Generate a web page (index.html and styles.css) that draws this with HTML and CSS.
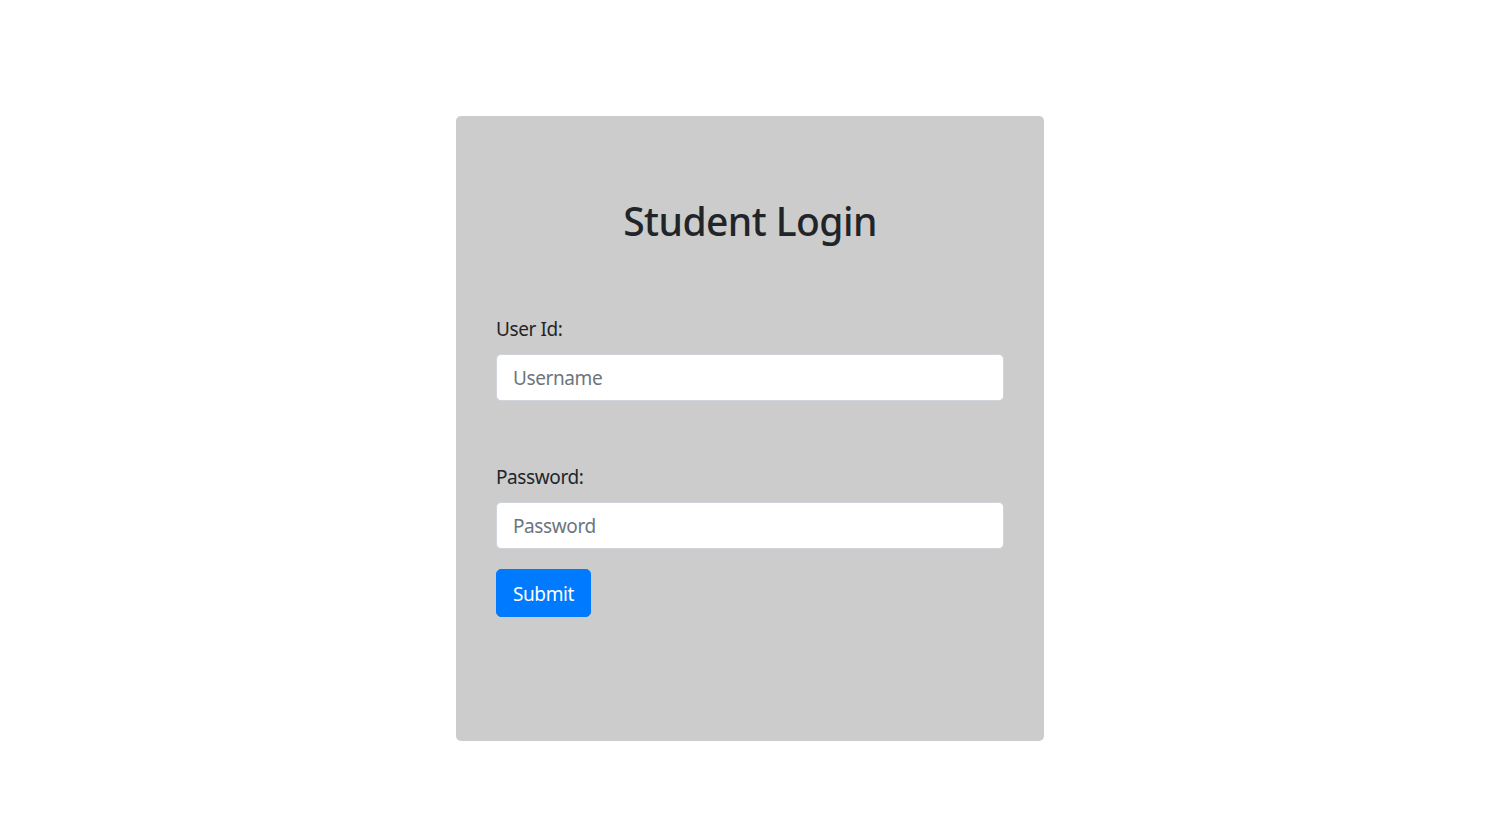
FILE: index.html
```html
<!DOCTYPE html>
<html lang="en">
<head>
  <meta charset="UTF-8">
  <title>Student Login</title>
  <link rel="stylesheet" href="styles.css">
</head>
<body>

  <div class="login-box">
    <h2 class="login-title">Student Login</h2>

    <form class="login-form">
      <div class="form-group">
        <label for="userId">User Id:</label>
        <input type="text" id="userId" class="form-control" placeholder="Username">
      </div>

      <div class="form-group form-group-last">
        <label for="password">Password:</label>
        <input type="password" id="password" class="form-control" placeholder="Password">
      </div>

      <button type="submit" class="btn-submit">Submit</button>
    </form>
  </div>

</body>
</html>
```

FILE: styles.css
```css
body {
  margin: 0;
  padding: 116px 0 0 7px;
  background: #fff;
  color: #212529;
  font-family: 'Noto Sans', 'Open Sans', sans-serif;
  font-size: 19px;
  letter-spacing: -0.4px;
  line-height: 1.5;
}

.login-box {
  width: 588px;
  margin: 0 auto;
  box-sizing: border-box;
  padding: 81px 40px 124px;
  background-color: #ccc;
  border-radius: 5px;
}

.login-title {
  margin: 0 0 69px;
  font-size: 39px;
  font-weight: 500;
  letter-spacing: -0.55px;
  line-height: 48px;
  text-align: center;
}

.login-form {
  display: flex;
  flex-direction: column;
  align-items: flex-start;
}

.form-group {
  width: 100%;
  display: flex;
  flex-direction: column;
  margin-bottom: 61px;
}

.form-group-last {
  margin-bottom: 20px;
}

.form-group label {
  display: block;
  margin-bottom: 10px;
  line-height: 30px;
}

.form-control {
  width: 100%;
  height: 47px;
  box-sizing: border-box;
  padding: 1px 16px 0;
  font-family: inherit;
  font-size: 19px;
  letter-spacing: -0.4px;
  color: #495057;
  background-color: #fff;
  border: 1px solid #ced4da;
  border-radius: 5px;
}

.form-control::placeholder {
  color: #6c757d;
}

.btn-submit {
  height: 48px;
  padding: 1px 16px 0;
  font-family: inherit;
  font-size: 19px;
  letter-spacing: -0.4px;
  color: #fff;
  background-color: #007bff;
  border: 1px solid #007bff;
  border-radius: 5px;
  cursor: pointer;
}

.btn-submit:hover {
  background-color: #0069d9;
}
```
